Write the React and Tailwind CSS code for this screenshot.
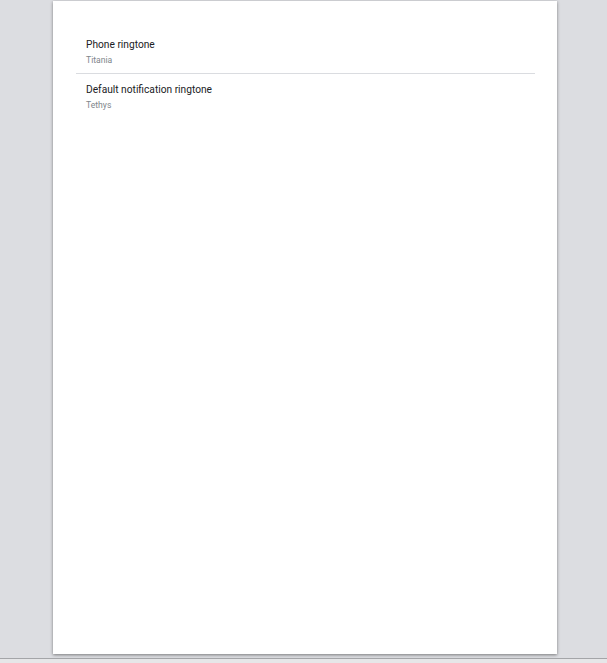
import React from 'react';

const ringtones = [
  { title: 'Phone ringtone', value: 'Titania' },
  { title: 'Default notification ringtone', value: 'Tethys' }
];

export default function App() {
  return (
    <div className="h-[663px] w-full bg-[#dcdde1] overflow-hidden flex flex-col" style={{ fontFamily: 'Roboto, "Noto Sans", sans-serif' }}>
      <div className="mt-px ml-[53px] w-[504px] h-[653px] shrink-0 bg-white shadow-[0_1px_3px_rgba(0,0,0,0.45)]">
        <div className="pt-[28px] pl-[23px] pr-[22px]">
          {ringtones.map((item, i) => (
            <div key={item.title}>
              {i > 0 && <div className="h-px bg-[#dadce0]" />}
              <div className="pt-[9px] pb-[7px] px-[10px]">
                <div className="text-[10.2px] leading-[14px] text-[#202124]">{item.title}</div>
                <div className="mt-[2px] text-[8.6px] leading-[12px] text-[#80868b]">{item.value}</div>
              </div>
            </div>
          ))}
        </div>
      </div>
      <div className="mt-[4px] border-t border-[#a4a5a8] bg-[#e6e6e8] flex-1" />
    </div>
  );
}
